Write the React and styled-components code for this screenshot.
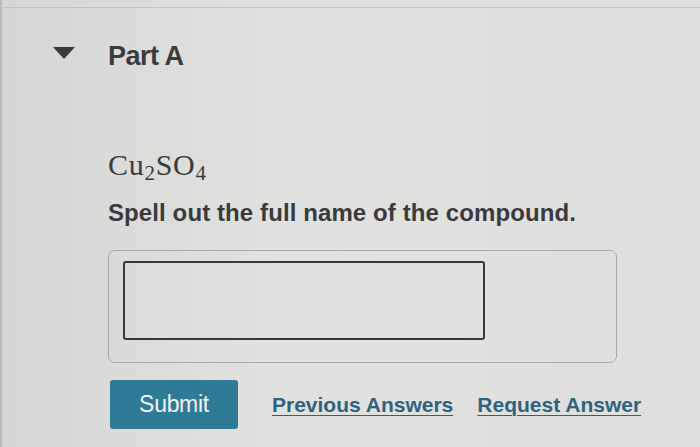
import React from "react";
import styled, { createGlobalStyle } from "styled-components";

const Global = createGlobalStyle`
  html, body {
    margin: 0;
    padding: 0;
    background: #dddddb;
  }
  body {
    font-family: "Liberation Sans", Arial, sans-serif;
  }
`;

const Page = styled.div`
  width: 700px;
  height: 447px;
  overflow: hidden;
  box-sizing: border-box;
  background: linear-gradient(90deg, #d6d6d4 0%, #e1e1df 40%, #dfdfdd 100%);
  border-left: 2px solid #b9b9b7;
  padding-top: 7px;
`;

const TopRule = styled.div`
  height: 1px;
  background: #c3c3c1;
`;

const Header = styled.div`
  display: flex;
  align-items: center;
  height: 34px;
  margin-top: 31px;
`;

const Caret = styled.div`
  width: 0;
  height: 0;
  margin-left: 51px;
  border-left: 11px solid transparent;
  border-right: 11px solid transparent;
  border-top: 12px solid #3a3a3e;
  margin-top: -6px;
`;

const Title = styled.h2`
  margin: 0 0 0 33px;
  font-size: 27px;
  font-weight: 700;
  letter-spacing: -0.5px;
  color: #3b3b3d;
`;

const Body = styled.div`
  padding-left: 106px;
`;

const Formula = styled.div`
  margin-top: 75px;
  font-family: "Liberation Serif", "Times New Roman", serif;
  font-size: 30px;
  color: #3a3a3c;
  line-height: 34px;
  letter-spacing: 0.7px;

  sub {
    font-size: 21px;
    vertical-align: -5px;
    line-height: 0;
  }
`;

const Prompt = styled.p`
  margin: 16px 0 0 0;
  font-size: 24px;
  font-weight: 700;
  color: #3a3a3c;
  line-height: 30px;
  letter-spacing: 0.1px;
`;

const AnswerBox = styled.div`
  margin-top: 22px;
  width: 509px;
  height: 113px;
  box-sizing: border-box;
  border: 1px solid #a9a9a7;
  border-radius: 7px;
  padding: 10px 0 0 14px;
`;

const Field = styled.input`
  width: 362px;
  height: 79px;
  box-sizing: border-box;
  border: 2px solid #38383c;
  border-radius: 3px;
  background: transparent;
  outline: none;
`;

const Actions = styled.div`
  display: flex;
  align-items: center;
  margin-top: 17px;
`;

const SubmitButton = styled.button`
  width: 128px;
  height: 49px;
  border: none;
  border-radius: 3px;
  background: #2f7b97;
  color: #f2f5f6;
  font-family: "Liberation Sans", Arial, sans-serif;
  font-size: 23px;
  letter-spacing: -0.3px;
  margin-left: 2px;
`;

const LinkText = styled.a`
  margin-left: ${(p) => p.gap}px;
  font-size: 21px;
  font-weight: 700;
  color: #2e6380;
  text-decoration: underline;
  text-underline-offset: 3px;
  text-decoration-thickness: 1px;
  cursor: pointer;
`;

export default function App() {
  return (
    <Page>
      <Global />
      <TopRule />
      <Header>
        <Caret />
        <Title>Part A</Title>
      </Header>
      <Body>
        <Formula>
          Cu<sub>2</sub>SO<sub>4</sub>
        </Formula>
        <Prompt>Spell out the full name of the compound.</Prompt>
        <AnswerBox>
          <Field type="text" />
        </AnswerBox>
        <Actions>
          <SubmitButton>Submit</SubmitButton>
          <LinkText gap={34}>Previous Answers</LinkText>
          <LinkText gap={24}>Request Answer</LinkText>
        </Actions>
      </Body>
    </Page>
  );
}
